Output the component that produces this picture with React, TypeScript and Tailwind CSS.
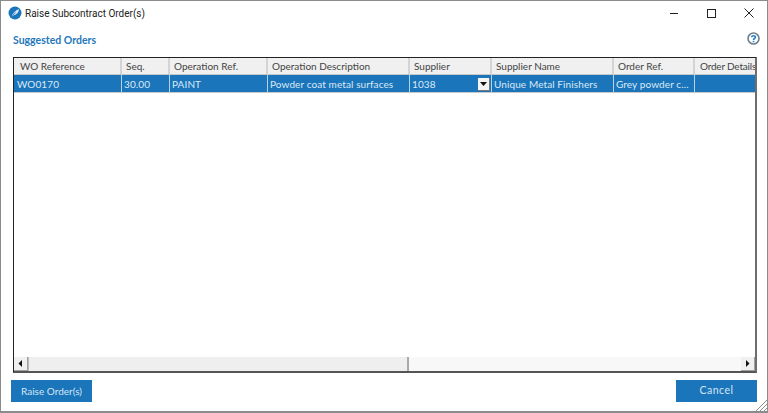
const columns = [
  { title: "WO Reference", value: "WO0170", width: "w-[108px]" },
  { title: "Seq.", value: "30.00", width: "w-[48px]" },
  { title: "Operation Ref.", value: "PAINT", width: "w-[98px]" },
  { title: "Operation Description", value: "Powder coat metal surfaces", width: "w-[142px]" },
  { title: "Supplier", value: "1038", width: "w-[82px]", dropdown: true },
  { title: "Supplier Name", value: "Unique Metal Finishers", width: "w-[122px]" },
  { title: "Order Ref.", value: "Grey powder c...", width: "w-[81px]" },
  { title: "Order Details", value: "", width: "flex-1" },
];

function AppIcon() {
  return (
    <svg width="14" height="14" viewBox="0 0 14 14" className="shrink-0">
      <circle cx="7" cy="7" r="6.5" fill="#1b75bb" />
      <path d="M3.5 10.5 C5 7 7.5 4.5 11 3 C10.8 6 9 8.5 5.5 9.5 Z" fill="#dcebf6" />
      <path d="M3 11.5 L7.5 6.5" stroke="#1b75bb" strokeWidth="0.8" />
    </svg>
  );
}

function HelpIcon() {
  return (
    <svg width="13" height="13" viewBox="0 0 13 13">
      <circle cx="6.5" cy="6.5" r="5.5" fill="white" stroke="#6f808d" strokeWidth="1.6" />
      <path d="M4.6 5.2 C4.7 3.2 8.4 3.2 8.4 5.2 C8.4 6.6 6.5 6.4 6.5 8" fill="none" stroke="#2a82c6" strokeWidth="1.6" />
      <rect x="5.7" y="8.8" width="1.6" height="1.5" fill="#2a82c6" />
    </svg>
  );
}

function ScrollButton({ dir }: { dir: "left" | "right" }) {
  return (
    <div className="w-[14px] h-full flex items-center justify-center bg-[#f0f0f0] border-r border-b border-[#a0a0a0]">
      <svg width="5" height="7" viewBox="0 0 5 7">
        <path d={dir === "left" ? "M4 0 L4 7 L0.5 3.5 Z" : "M1 0 L1 7 L4.5 3.5 Z"} fill="#111" />
      </svg>
    </div>
  );
}

export default function App() {
  return (
    <div className="relative w-[768px] h-[413px] flex flex-col bg-white border border-[#8c8c8c] border-b-2 font-['Lato',sans-serif] overflow-hidden">
      {/* title bar */}
      <div className="h-[24px] flex items-center pl-[7px] shrink-0">
        <AppIcon />
        <span className="ml-[3px] text-[10px] text-[#222] font-['Roboto',sans-serif]">Raise Subcontract Order(s)</span>
        <div className="ml-auto flex items-center">
          <div className="w-[8px] h-px bg-[#222] mr-[29px]" />
          <div className="w-[9px] h-[9px] border border-[#222] mr-[28px]" />
          <svg width="10" height="10" viewBox="0 0 10 10" className="mr-[13px]">
            <path d="M0.5 0.5 L9.5 9.5 M9.5 0.5 L0.5 9.5" stroke="#222" strokeWidth="1" />
          </svg>
        </div>
      </div>

      <div className="h-[32px] flex items-center justify-between pl-[12px] pr-[7px] shrink-0">
        <span className="text-[10.5px] font-bold text-[#1f78b9] mt-[-1px]">Suggested Orders</span>
        <span className="mt-[-6px]"><HelpIcon /></span>
      </div>

      {/* grid */}
      <div className="ml-[12px] mr-[10px] h-[316px] flex flex-col border border-[#222] border-r-2 border-r-[#6e6e6e] border-b-2 border-b-[#555] shrink-0">
        <div className="h-[17px] flex bg-[#f0f0f0] border-b border-[#c8c8c8]">
          {columns.map((col) => (
            <div key={col.title} className={`${col.width} pl-[4px] first:pl-[6px] text-[10px] leading-[17px] text-[#444] whitespace-nowrap overflow-hidden border-r-2 border-[#d4d4d4] last:border-r-0 last:pl-[5px] last:tracking-[-0.2px]`}>
              {col.title}
            </div>
          ))}
        </div>
        <div className="h-[18px] flex bg-[#1b75bb] border-b border-[#c8c8c8]">
          {columns.map((col) => (
            <div key={col.title} className={`${col.width} pl-[2px] first:pl-[3px] pr-[1px] pt-[1px] flex items-center justify-between text-[10px] tracking-[0.1px] text-[#dce9f4] whitespace-nowrap overflow-hidden border-r border-[#b5d2e8] last:border-r-0`}>
              <span>{col.value}</span>
              {col.dropdown && (
                <span className="w-[12px] h-[13px] flex items-center justify-center bg-[#f4f4f4] border-r border-b border-[#777]">
                  <svg width="7" height="4" viewBox="0 0 7 4"><path d="M0 0 H7 L3.5 4 Z" fill="#111" /></svg>
                </span>
              )}
            </div>
          ))}
        </div>
        <div className="flex-1 bg-white" />
        <div className="h-[14px] flex bg-[#f1f1f1]">
          <ScrollButton dir="left" />
          <div className="w-[381px] bg-[#efefef] border-l border-r-2 border-l-[#bbbbbb] border-r-[#aaaaaa]" />
          <div className="flex-1 bg-[#f8f8f8]" />
          <ScrollButton dir="right" />
        </div>
      </div>

      {/* actions */}
      <div className="flex justify-between pl-[10px] pr-[10px] pt-[7px]">
        <button className="w-[81px] h-[22px] bg-[#1b75bb] text-[10px] text-[#d3e5f3]">Raise Order(s)</button>
        <button className="w-[81px] h-[22px] bg-[#1b75bb] text-[10.5px] tracking-[0.5px] text-[#d3e5f3]">Cancel</button>
      </div>

      {/* resize grip */}
      <svg width="11" height="11" viewBox="0 0 11 11" className="absolute right-0 bottom-0">
        <path d="M0 11 L11 0 M4 11 L11 4 M8 11 L11 8" stroke="#8c8c8c" strokeWidth="1" />
      </svg>
    </div>
  );
}
